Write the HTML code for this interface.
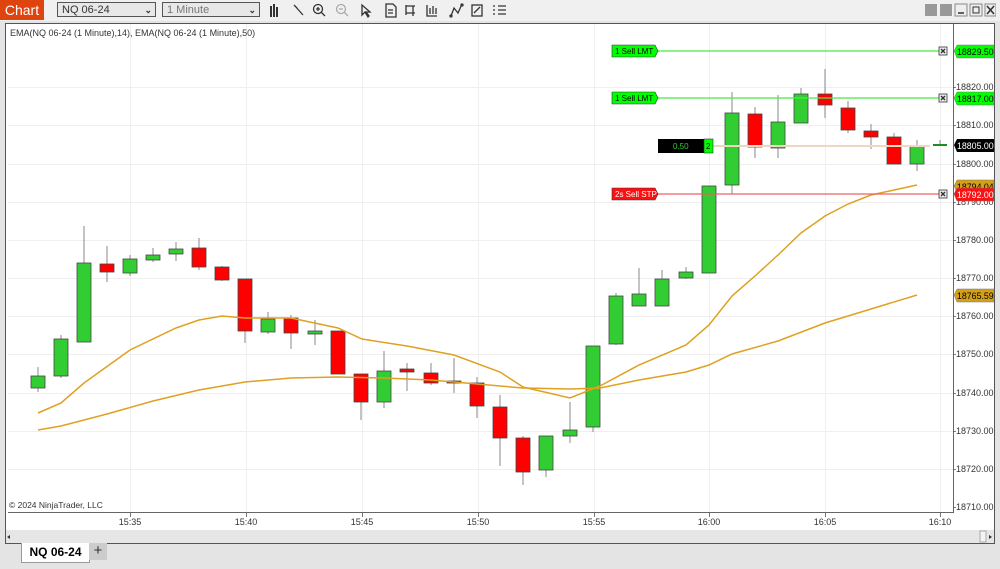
<!DOCTYPE html>
<html><head><meta charset="utf-8"><style>
body{margin:0;width:1000px;height:569px;background:#e4e4e4;font-family:"Liberation Sans",sans-serif;overflow:hidden;position:relative}
.tb{position:absolute;left:0;top:0;width:1000px;height:21px;background:#f0f0f0}
.chartbtn{position:absolute;left:0;top:0;width:44px;height:20px;background:#e0440e;color:#fff;font-size:14px;line-height:20px;text-align:center}
.sel{position:absolute;top:2px;height:15px;border:1px solid #555;background:#e8e8e8;font-size:11px;line-height:15px;padding-left:4px;box-sizing:border-box;color:#333}
.sel b{position:absolute;right:3px;top:0;font-size:9px}
.frame{position:absolute;left:5px;top:23px;width:990px;height:521px;border:1px solid #555;background:#fff;box-sizing:border-box}
.tab{position:absolute;left:21px;top:543px;width:67px;height:19px;background:#fff;border:1px solid #999;border-top:none;font-weight:bold;font-size:12px;line-height:18px;text-align:center}
.plus{position:absolute;left:89px;top:543px;width:18px;height:17px;background:#ccc;font-size:15px;line-height:16px;text-align:center;color:#333}
</style></head><body>
<div class="tb">
<div class="chartbtn">Chart</div>
<div class="sel" style="left:57px;width:99px">NQ 06-24<b>&#8964;</b></div>
<div class="sel" style="left:162px;width:98px;color:#777">1 Minute<b style="color:#333">&#8964;</b></div>
<svg style="position:absolute;left:265px;top:2px" width="245" height="17" fill="none" stroke="#333" stroke-width="1.3">
<path d="M6 4v11M9 2v13M12 5v10" stroke-width="2"/>
<path d="M30 4l8 9M29 3l3 3"/>
<circle cx="53" cy="7" r="4.5"/><path d="M56 10l4 4M51 7h4M53 5v4"/>
<g stroke="#aaa"><circle cx="76" cy="7" r="4.5"/><path d="M79 10l4 4M74 7h4"/></g>
<path d="M97 3l0 10 3-3 3 5 1-1-3-4h4z"/>
<path d="M121 2h7l3 3v10h-10z M123 8h5M123 11h5"/>
<path d="M141 3v10M141 4h9M141 11h9M148 4v10"/>
<path d="M162 3v11h10M165 6v6M168 4v8M171 6v6"/>
<path d="M186 14l3-8 4 5 4-9" /><circle cx="186" cy="14" r="1"/><circle cx="197" cy="3" r="1"/>
<rect x="207" y="3" width="10" height="11"/><path d="M209 11l6-6"/>
<path d="M228 4h2M233 4h8M228 8h2M233 8h8M228 12h2M233 12h8"/>
</svg>
<svg style="position:absolute;left:924px;top:3px" width="72" height="15">
<rect x="1" y="1" width="12" height="12" fill="#999"/><rect x="16" y="1" width="12" height="12" fill="#999"/>
<rect x="31" y="1" width="12" height="12" fill="#eee" stroke="#888"/><path d="M34 10h6" stroke="#333" stroke-width="1.5"/>
<rect x="46" y="1" width="12" height="12" fill="#eee" stroke="#888"/><rect x="49" y="4" width="6" height="6" fill="none" stroke="#333"/>
<rect x="61" y="1" width="11" height="12" fill="#eee" stroke="#888"/><path d="M63 3l7 8M70 3l-7 8" stroke="#333" stroke-width="1.6"/>
</svg>
</div>
<div class="frame"></div>
<svg style="position:absolute;left:0;top:0" width="1000" height="569" font-family="Liberation Sans, sans-serif">
<g stroke="#efefef" stroke-width="1">
<path d="M8 469.5H953M8 431.5H953M8 393.5H953M8 354.5H953M8 316.5H953M8 278.5H953M8 240.5H953M8 202.5H953M8 164.5H953M8 125.5H953M8 87.5H953"/>
<path d="M130.5 24V513M246.5 24V513M362.5 24V513M478.5 24V513M594.5 24V513M709.5 24V513M825.5 24V513M940.5 24V513"/>
</g>
<path d="M953.5 24V513M8 512.5H953" stroke="#666"/>
<rect x="6" y="530" width="988" height="13" fill="#e6e6e6"/>
<path d="M10 535l-3 2 3 2z" fill="#333"/><rect x="980" y="531" width="6" height="11" fill="#f4f4f4" stroke="#aaa"/><path d="M989 535l3 2-3 2z" fill="#333"/>
<g font-size="9" fill="#333">
<text x="10" y="36">EMA(NQ 06-24 (1 Minute),14), EMA(NQ 06-24 (1 Minute),50)</text>
<text x="9" y="508" font-size="8.5">© 2024 NinjaTrader, LLC</text>
<g text-anchor="middle"><text x="130" y="525">15:35</text><text x="246" y="525">15:40</text><text x="362" y="525">15:45</text><text x="478" y="525">15:50</text><text x="594" y="525">15:55</text><text x="709" y="525">16:00</text><text x="825" y="525">16:05</text><text x="940" y="525">16:10</text></g>
<g font-size="9"><text x="956" y="510">18710.00</text><text x="956" y="472">18720.00</text><text x="956" y="434">18730.00</text><text x="956" y="357">18750.00</text><text x="956" y="319">18760.00</text><text x="956" y="281">18770.00</text><text x="956" y="243">18780.00</text><text x="956" y="205">18790.00</text><text x="956" y="167">18800.00</text><text x="956" y="128">18810.00</text><text x="956" y="90">18820.00</text><text x="956" y="396">18740.00</text></g>
</g>
<g stroke="#555" stroke-width="0.8" fill="#555">
<path d="M130.5 513v4M246.5 513v4M362.5 513v4M478.5 513v4M594.5 513v4M709.5 513v4M825.5 513v4M940.5 513v4"/>
<path d="M953 507.5h3M953 469.5h3M953 431.5h3M953 393.5h3M953 354.5h3M953 316.5h3M953 278.5h3M953 240.5h3M953 202.5h3M953 164.5h3M953 125.5h3M953 87.5h3"/>
</g>
<g stroke="#888" stroke-width="1">
<path d="M38 367V392M61 335V378M84 226V342M107 246V282M130 255V276M153 248V262M176 242V261M199 238V270M222 266V281M245 279V343M268 312V334M291 315V349M315 320V345M338 331V374M361 374V420M384 351V408M407 363V391M431 363V385M454 358V393M477 377V418M500 395V466M523 436V485M546 436V477M570 402V443M593 346V432M616 293V345M639 268V306M662 270V306M686 267V279M709 186V273M732 92V194M755 107V158M778 95V158M801 88V123M825 69V118M848 101V133M871 124V149M894 133V164M917 140V171M940 140V146"/>
</g>
<g stroke="#444" stroke-width="0.8" fill="#32cd32">
<rect x="31" y="376" width="14" height="12"/><rect x="54" y="339" width="14" height="37"/><rect x="77" y="263" width="14" height="79"/>
<rect x="123" y="259" width="14" height="14"/><rect x="146" y="255" width="14" height="5"/><rect x="169" y="249" width="14" height="5"/>
<rect x="261" y="319" width="14" height="13"/><rect x="308" y="331" width="14" height="3"/><rect x="377" y="371" width="14" height="31"/>
<rect x="539" y="436" width="14" height="34"/><rect x="563" y="430" width="14" height="6"/><rect x="586" y="346" width="14" height="81"/>
<rect x="609" y="296" width="14" height="48"/><rect x="632" y="294" width="14" height="12"/><rect x="655" y="279" width="14" height="27"/>
<rect x="679" y="272" width="14" height="6"/><rect x="702" y="186" width="14" height="87"/><rect x="725" y="113" width="14" height="72"/>
<rect x="771" y="122" width="14" height="26"/><rect x="794" y="94" width="14" height="29"/><rect x="910" y="146" width="14" height="18"/>
</g>
<g stroke="#444" stroke-width="0.8" fill="#ff0000">
<rect x="100" y="264" width="14" height="8"/><rect x="192" y="248" width="14" height="19"/><rect x="215" y="267" width="14" height="13"/>
<rect x="238" y="279" width="14" height="52"/><rect x="284" y="318" width="14" height="15"/><rect x="331" y="331" width="14" height="43"/>
<rect x="354" y="374" width="14" height="28"/><rect x="400" y="369" width="14" height="3"/><rect x="424" y="373" width="14" height="10"/>
<rect x="447" y="381" width="14" height="2"/><rect x="470" y="383" width="14" height="23"/><rect x="493" y="407" width="14" height="31"/>
<rect x="516" y="438" width="14" height="34"/><rect x="748" y="114" width="14" height="33"/><rect x="818" y="94" width="14" height="11"/>
<rect x="841" y="108" width="14" height="22"/><rect x="864" y="131" width="14" height="6"/><rect x="887" y="137" width="14" height="27"/>
</g>
<path d="M933 145h14" stroke="#228b22" stroke-width="2"/>
<g fill="none" stroke="#e0a020" stroke-width="1.5">
<polyline points="38,413 61,403 84,383 130,350 176,328 199,320 222,316 245,318 291,318 338,328 362,339 407,346 454,355 500,372 523,387 570,398 600,386 639,365 686,345 709,325 732,296 755,276 778,255 801,233 825,216 848,204 871,195 894,190 917,185"/>
<polyline points="38,430 61,426 107,414 153,401 199,390 245,382 291,378 338,377 384,378 431,380 477,384 523,388 570,389 600,388 639,380 686,372 709,365 732,354 778,341 825,323 871,309 917,295"/>
</g>
<g stroke-width="1.2">
<path d="M657 51H940M657 98H940" stroke="#44ee44"/>
<path d="M657 194H940" stroke="#f06060"/>
<path d="M706 146H930" stroke="#f0d8c0" stroke-width="2"/>
</g>
<g font-size="8">
<path d="M612 45h43l3 6-3 6h-43z" fill="#00ff00" stroke="#333" stroke-width="0.6"/><text x="615" y="54">1 Sell LMT</text>
<path d="M612 92h43l3 6-3 6h-43z" fill="#00ff00" stroke="#333" stroke-width="0.6"/><text x="615" y="101">1 Sell LMT</text>
<path d="M612 188h43l3 6-3 6h-43z" fill="#ff1010" stroke="#333" stroke-width="0.6"/><text x="615" y="197" fill="#fff">2s Sell STP</text>
<rect x="658" y="139" width="46" height="14" fill="#000"/><text x="673" y="149" fill="#32cd32">0.50</text>
<rect x="704" y="139" width="9" height="14" fill="#00ff00" stroke="#333" stroke-width="0.6"/><text x="706" y="149">2</text>
</g>
<g stroke="#333" stroke-width="0.8">
<rect x="939" y="47" width="8" height="8" fill="#eee"/><path d="M941 49l4 4M945 49l-4 4" stroke-width="1.4"/>
<rect x="939" y="94" width="8" height="8" fill="#eee"/><path d="M941 96l4 4M945 96l-4 4" stroke-width="1.4"/>
<rect x="939" y="190" width="8" height="8" fill="#eee"/><path d="M941 192l4 4M945 192l-4 4" stroke-width="1.4"/>
</g>
<g font-size="8.8">
<path d="M954 186l3-6h37v13h-37z" fill="#d4a017" stroke="#777" stroke-width="0.5"/><text x="957" y="190">18794.04</text>
<path d="M954 295l3-6h37v13h-37z" fill="#d4a017" stroke="#777" stroke-width="0.5"/><text x="957" y="299">18765.59</text>
<path d="M954 51l3-6h37v13h-37z" fill="#00ff00" stroke="#777" stroke-width="0.5"/><text x="957" y="55">18829.50</text>
<path d="M954 98l3-6h37v13h-37z" fill="#00ff00" stroke="#777" stroke-width="0.5"/><text x="957" y="102">18817.00</text>
<path d="M954 145l3-6h37v13h-37z" fill="#000"/><text x="957" y="149" fill="#fff">18805.00</text>
<path d="M954 194l3-6h37v13h-37z" fill="#ff1010" stroke="#777" stroke-width="0.5"/><text x="957" y="198" fill="#fff">18792.00</text>
</g>
</svg>
<div class="tab">NQ 06-24</div>
<div class="plus">+</div>
</body></html>
